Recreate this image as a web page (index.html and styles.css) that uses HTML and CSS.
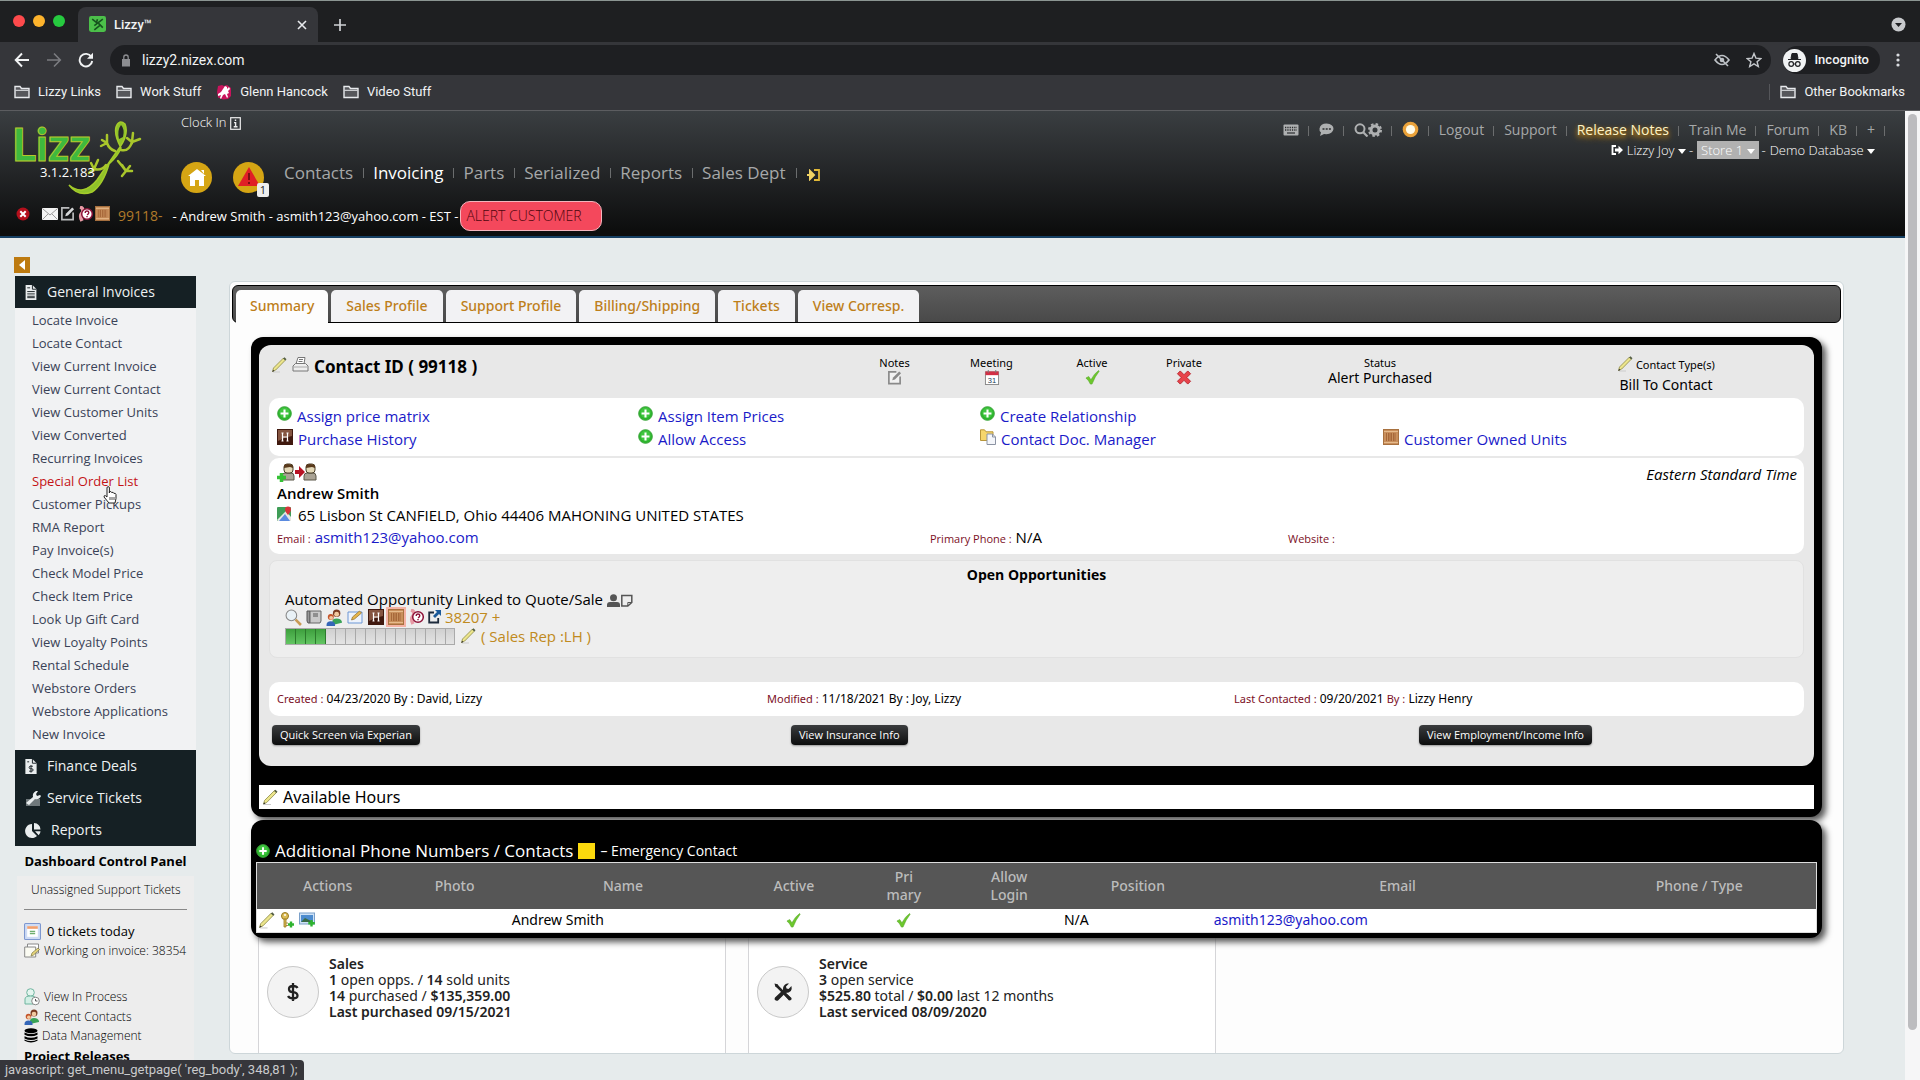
FILE: index.html
```html
<!DOCTYPE html>
<html lang="en">
<head>
<meta charset="utf-8">
<title>Lizzy™</title>
<link rel="stylesheet" href="styles.css">
</head>
<body>
<svg class="sprite" aria-hidden="true">
  <symbol id="folder" viewBox="0 0 16 14"><path d="M1 12.5V1.5h5l1.5 2H15v9z" fill="#56575b" stroke="#e8eaed" stroke-width="1.4"/><path d="M1.5 5.3h13" stroke="#e8eaed"/></symbol>
  <symbol id="pencil" viewBox="0 0 16 16"><path d="M2 15h7" stroke="#ccc"/><path d="M1.500 14.500l1-3.500L12.500 1l2 2L4.700 13z" fill="#ece58c" stroke="#8d8a45" stroke-width=".8"/><path d="M12 1.500L13.500.3 15.500 2.300 14.300 3.600z" fill="#555f45"/><path d="M1.200 14.900l1-2.200 1.200 1.200z" fill="#333"/></symbol>
  <symbol id="plus" viewBox="0 0 16 16"><circle cx="8" cy="8" r="7.300" fill="#2db52d" stroke="#3ba43b"/><circle cx="8" cy="7" r="5.500" fill="#4dd14d" opacity=".6"/><path d="M8 3.800v8.400M3.800 8h8.400" stroke="#fff" stroke-width="2.200"/></symbol>
  <symbol id="hist" viewBox="0 0 16 16"><rect width="16" height="16" fill="#40190f"/><path d="M1 1h14v6Q8 8 1 12z" fill="#855541"/><path d="M5.500 4v8M10.500 4v8M5.500 8h5M4.500 4h2M9.500 4h2M4.500 12h2M9.500 12h2" stroke="#fff" stroke-width="1.200"/></symbol>
  <symbol id="crate" viewBox="0 0 16 16"><rect x=".5" y=".5" width="15" height="15" fill="#c98f5c" stroke="#a8713f"/><rect x="3" y="4" width="10" height="8" fill="#a7683a"/><path d="M4.500 4v8M7 4v8M9.500 4v8M12 4v8" stroke="#d09a66" stroke-width=".8"/><path d="M1 2.500h14M1 13.500h14" stroke="#e6bb8c"/></symbol>
  <symbol id="check" viewBox="0 0 16 16"><path d="M1 8.500l3-1.500 2.300 3.500Q9.500 4 14.500.5l.6.8Q10.500 7 7.500 15H5.700Q4 11 1 8.500z" fill="#6cc72c" stroke="#58a82a" stroke-width=".6"/></symbol>
  <symbol id="cross" viewBox="0 0 16 16"><path d="M4 1l4 4 4-4 3 3-4 4 4 4-3 3-4-4-4 4-3-3 4-4-4-4z" fill="#e8434b" stroke="#b8262e"/></symbol>
  <symbol id="note" viewBox="0 0 16 16"><path d="M10 2H2v12.500h12V7" fill="#f2f2f2" stroke="#8a8a8a" stroke-width="1.800"/><path d="M5.500 11l1-3L13 1.500l2 2L8.500 10z" fill="#8a8a8a"/></symbol>
  <symbol id="notedark" viewBox="0 0 16 16"><path d="M10 2H2v12.500h12V7" fill="none" stroke="#b9bbbc" stroke-width="1.800"/><path d="M5.500 11l1-3L13 1.500l2 2L8.500 10z" fill="#d5d7d8"/></symbol>
  <symbol id="cal" viewBox="0 0 16 16"><rect x="1" y="2" width="14" height="13.500" fill="#fff" stroke="#888"/><path d="M1 1.500h14v4H1z" fill="#d22f45"/><path d="M4 0v3M12 0v3" stroke="#777"/><text x="8" y="13.500" text-anchor="middle" font-size="8" font-family="Liberation Sans" fill="#223a55">31</text></symbol>
  <symbol id="people" viewBox="0 0 16 16"><circle cx="10" cy="4" r="3.500" fill="#7a3b22"/><circle cx="10" cy="5" r="2.300" fill="#f1c9a0"/><path d="M6 15v-3q0-3 4-3t5 3v1z" fill="#3aa357"/><circle cx="4.500" cy="7.500" r="2.800" fill="#c5552b"/><circle cx="4.800" cy="8.300" r="1.800" fill="#f1c9a0"/><path d="M.5 16v-1q0-3.500 4-3.500t4 3.500v1z" fill="#3566b8"/></symbol>
  <symbol id="heart" viewBox="0 0 16 16"><path d="M3 1c4 1 3 5 2 6-2 2-2 4 0 8" fill="none" stroke="#e79aa5" stroke-width="3.500"/><circle cx="10" cy="8" r="5.300" fill="#fff" stroke="#8d1238" stroke-width="1.500"/><path d="M8.200 7Q8.200 5 10 5t1.800 1.700Q11.800 8 10 8.800M10 10v1.300" fill="none" stroke="#8d1238" stroke-width="1.400"/></symbol>
  <symbol id="docs" viewBox="0 0 16 16"><path d="M.5 11.500V.8h4l1.500 2h7v8.700z" fill="#f6d66c" stroke="#b8963a"/><path d="M7 5h5.500l3 3v7.500H7z" fill="#f4f6fa" stroke="#8b93a3"/><path d="M12.500 5v3h3" fill="none" stroke="#8b93a3"/></symbol>
  <symbol id="notes2" viewBox="0 0 16 16"><path d="M3.500 1h11v9h-11z" fill="#fff" stroke="#888"/><path d="M.7 4h11v10H.7z" fill="#fbfbf2" stroke="#888"/><path d="M7 13l1-3 6-5 1.500 1.500-6 5.500z" fill="#e8d77c" stroke="#7a7440" stroke-width=".7"/></symbol>
  <symbol id="doc" viewBox="0 0 12 16"><path d="M0 0h7.500L12 4.500V16H0z" fill="#e9edee"/><path d="M7.500 0v4.500H12M2 3h3M2 7h8M2 9.500h8M2 12h8M2 13.500h8" stroke="#172024" fill="none"/></symbol>
</svg>

<header class="browser">
  <div class="tabstrip">
    <span class="light red"></span><span class="light amber"></span><span class="light green"></span>
    <div class="tab">
      <svg width="17" height="17" viewBox="0 0 16 16"><rect width="16" height="15" rx="2" fill="#4cc04a"/><path d="M3 3l4 3 1-3M5 9l4-3 4-3M9 7l4 4M5 13l5-4" stroke="#16521e" stroke-width="1.500" fill="none"/></svg>
      <span class="tab-title">Lizzy™</span>
      <button class="plain" aria-label="Close tab"><svg width="10" height="10" viewBox="0 0 10 10"><path d="M1 1l8 8M9 1L1 9" stroke="#e8eaed" stroke-width="1.600"/></svg></button>
    </div>
    <button class="plain" aria-label="New tab"><svg width="14" height="14" viewBox="0 0 14 14"><path d="M7 1v12M1 7h12" stroke="#d0d2d5" stroke-width="1.700"/></svg></button>
    <button class="plain push" aria-label="Search tabs"><svg width="15" height="15" viewBox="0 0 15 15"><circle cx="7.500" cy="7.500" r="7" fill="#c8cacd"/><path d="M4 6h7l-3.500 4z" fill="#202124"/></svg></button>
  </div>
  <div class="toolbar">
    <button class="plain" aria-label="Back"><svg width="16" height="16" viewBox="0 0 16 16"><path d="M15 8H2M8 1.500L1.700 8 8 14.500" fill="none" stroke="#f1f3f4" stroke-width="1.900"/></svg></button>
    <button class="plain" aria-label="Forward"><svg width="16" height="16" viewBox="0 0 16 16"><path d="M1 8h13M8 1.500L14.300 8 8 14.500" fill="none" stroke="#7b7c80" stroke-width="1.600"/></svg></button>
    <button class="plain" aria-label="Reload"><svg width="16" height="16" viewBox="0 0 16 16"><path d="M13.300 4.800A6.300 6.300 0 1 0 14.200 9" fill="none" stroke="#f1f3f4" stroke-width="1.900"/><path d="M15 .8v6H9z" fill="#f1f3f4"/></svg></button>
    <div class="omnibox">
      <svg width="10" height="13" viewBox="0 0 10 13"><rect x="1" y="5" width="8" height="7.500" fill="#8c8d91"/><path d="M2.800 5V3.200a2.200 2.200 0 0 1 4.400 0V5" fill="none" stroke="#8c8d91" stroke-width="1.300"/></svg>
      <input type="text" aria-label="Address" value="lizzy2.nizex.com">
      <svg width="16" height="14" viewBox="0 0 16 14"><path d="M1 7q7-9 14 0-7 9-14 0z" fill="none" stroke="#bdc1c6" stroke-width="1.700"/><circle cx="8" cy="7" r="2.300" fill="#bdc1c6"/><path d="M2 1l12 12" stroke="#bdc1c6" stroke-width="1.600"/></svg>
      <svg width="16" height="16" viewBox="0 0 16 16"><path d="M8 1.500l1.900 4.600 5 .4-3.800 3.200 1.200 4.800L8 11.900l-4.300 2.600 1.200-4.800L1.100 6.500l5-.4z" fill="none" stroke="#c4c7cb" stroke-width="1.400"/></svg>
    </div>
    <div class="incog">
      <svg width="23" height="23" viewBox="0 0 23 23"><circle cx="11.500" cy="11.500" r="11.500" fill="#f1f3f4"/><path d="M5 10.500h13M8 9.500l1-5h5l1 5z" stroke="#202124" fill="#202124"/><circle cx="8.200" cy="15" r="2.300" fill="none" stroke="#202124" stroke-width="1.200"/><circle cx="14.800" cy="15" r="2.300" fill="none" stroke="#202124" stroke-width="1.200"/><path d="M10.500 15h2" stroke="#202124"/></svg>
      <span>Incognito</span>
    </div>
    <button class="plain" aria-label="Menu"><svg width="4" height="16" viewBox="0 0 4 16"><circle cx="2" cy="3" r="1.600" fill="#dadce0"/><circle cx="2" cy="8" r="1.600" fill="#dadce0"/><circle cx="2" cy="13" r="1.600" fill="#dadce0"/></svg></button>
  </div>
  <nav class="bookmarks">
    <a href="#"><svg width="16" height="14"><use href="#folder"/></svg>Lizzy Links</a>
    <a href="#"><svg width="16" height="14"><use href="#folder"/></svg>Work Stuff</a>
    <a href="#"><svg width="16" height="16" viewBox="0 0 16 16"><path d="M2 2l4-1 2 1 3-1 4 3v8l-3 3-5 .5-5-2L1 8z" fill="#c8145c"/><path d="M9 2l2 1v2l2-2 1 2-2 2 1 2-2 1 1 3-1 1-2-4-2 1-2 4-1-1 1-3-3 1v-2l3-2 2-3z" fill="#fff"/></svg>Glenn Hancock</a>
    <a href="#"><svg width="16" height="14"><use href="#folder"/></svg>Video Stuff</a>
    <a href="#" class="other"><svg width="16" height="14"><use href="#folder"/></svg>Other Bookmarks</a>
  </nav>
</header>

<div class="viewport">
<div class="page">
  <header class="apphead">
    <div class="headtop">
      <div class="logo">
        <svg width="130" height="76" viewBox="0 0 130 76">
          <text x="-2" y="42" font-family="Lato" font-weight="900" font-size="46" fill="#3fb93e" stroke="#b5c92c" stroke-width="1">Lizz</text>
          <path d="M55 66q14 12 28-5Q96 42 106 28q9-13 5-23-6-5-9 3-2 8 5 21-3 8-12 16Q89 66 78 73q-14 5-23-7z" fill="#8fc22a" stroke="#a4cb2a" stroke-width="1.500"/>
          <path d="M105 20q-2-9 2-14 4 4 2 12z" fill="#25282a"/>
          <path d="M101 32q-6-2-8-8m-5-3l5 3 0-8m0 8l-6 3M107 31q8 2 11-8m-5-4l5 4 1-9m-1 9l8-3M92 46q-4 6-12 4m4-9l-4 9-3-6m3 6l-5 4M104 42q5 6 8 10m-4-6l4 6 4-5m-4 5l-4 5m4-5l6 0" fill="none" stroke="#a9c62b" stroke-width="2.500" stroke-linecap="round"/>
        </svg>
        <span class="version">3.1.2.183</span>
      </div>
      <div class="headmid">
        <a href="#" class="clock">Clock In <svg width="11" height="13" viewBox="0 0 11 13"><rect x=".7" y=".7" width="9.600" height="11.600" fill="none" stroke="#eee" stroke-width="1.200"/><path d="M5.500 2.500v1.600M4 5.600h1.600v4M3.700 9.800h3.800" stroke="#eee" stroke-width="1.400" fill="none"/></svg></a>
        <div class="navrow">
          <a href="#" aria-label="Home" class="round"><svg width="20" height="18" viewBox="0 0 20 18"><path d="M1 8l9-7 9 7h-2v10h-5v-6H8v6H3V8z" fill="#fff"/><path d="M14 2h3v4z" fill="#fff"/></svg></a>
          <a href="#" aria-label="Alerts" class="round alerts"><svg width="22" height="20" viewBox="0 0 22 20"><path d="M11 0l11 19H0z" fill="#e01f26"/><path d="M11 6v7M11 15v2" stroke="#7a0e12" stroke-width="2"/></svg><span class="badge">1</span></a>
          <nav class="mainnav">
            <a href="#">Contacts</a><a href="#" class="on">Invoicing</a><a href="#">Parts</a><a href="#">Serialized</a><a href="#">Reports</a><a href="#">Sales Dept</a>
          </nav>
          <svg width="13" height="12" viewBox="0 0 13 12"><path d="M0 6h5M3 2l4 4-4 4z" stroke="#f0d264" stroke-width="2" fill="#f0d264"/><path d="M7 1h5v10H7" stroke="#e0b838" stroke-width="1.800" fill="none"/></svg>
        </div>
      </div>
      <div class="headright">
        <nav class="tools">
          <a href="#" aria-label="Keyboard"><svg width="16" height="12" viewBox="0 0 16 12"><rect x=".5" y=".5" width="15" height="11" rx="1" fill="#aeb0b1"/><path d="M2 3.500h12M2 6h12" stroke="#2b2d2f" stroke-width="1.300" stroke-dasharray="1.300 1"/><path d="M4 9h8" stroke="#2b2d2f" stroke-width="1.200"/></svg></a>
          <a href="#" aria-label="Chat"><svg width="15" height="13" viewBox="0 0 15 13"><path d="M7.500.5q7 .5 7 5.500-1 5-7 5.200L5 11l-4 2 1-3.500Q0 8 .5 5.500 1.500.5 7.500.5z" fill="#aeb0b1"/><path d="M3.500 6h2M6.700 6h2M9.900 6h2" stroke="#2b2d2f" stroke-width="1.600"/></svg></a>
          <a href="#" aria-label="Search settings"><svg width="28" height="14" viewBox="0 0 28 14"><circle cx="6" cy="5.800" r="4.500" fill="none" stroke="#aeb0b1" stroke-width="2"/><path d="M9 9l4.500 4.500" stroke="#aeb0b1" stroke-width="2.200"/><circle cx="21" cy="7" r="4" fill="none" stroke="#aeb0b1" stroke-width="3"/><circle cx="21" cy="7" r="6" fill="none" stroke="#aeb0b1" stroke-width="2" stroke-dasharray="2.500 2.200"/></svg></a>
          <a href="#" aria-label="Theme"><svg width="17" height="17" viewBox="0 0 17 17"><circle cx="8.500" cy="8.500" r="7.800" fill="#eaa23a"/><circle cx="8.500" cy="8.500" r="4.600" fill="#fffbe8"/></svg></a>
          <a href="#">Logout</a><a href="#">Support</a><a href="#" class="glow">Release Notes</a><a href="#">Train Me</a><a href="#">Forum</a><a href="#">KB</a><a href="#">+</a>
        </nav>
        <div class="who">
          <svg width="12" height="10" viewBox="0 0 12 10"><path d="M5 1H1.500v8H5" fill="none" stroke="#fff" stroke-width="1.800"/><path d="M4 3.500h3.500V.8L12 5 7.500 9.200V6.500H4z" fill="#fff"/></svg>
          <a href="#">Lizzy Joy <i class="caret"></i></a><span>-</span>
          <button class="store">Store 1 <i class="caret"></i></button><span>-</span>
          <a href="#">Demo Database <i class="caret"></i></a>
        </div>
      </div>
    </div>
    <div class="custrow">
      <button class="plain closecust" aria-label="Close contact"><svg width="14" height="14" viewBox="0 0 14 14"><circle cx="7" cy="7" r="6.500" fill="#b3101c"/><path d="M4.300 4.300l5.400 5.400M9.700 4.300L4.300 9.700" stroke="#fff" stroke-width="2"/></svg></button>
      <span class="custicons">
        <svg width="16" height="12" viewBox="0 0 16 12"><rect width="16" height="12" rx="1" fill="#f3f3f3"/><path d="M1 1l7 6 7-6M1 11l5-5M15 11l-5-5" fill="none" stroke="#999"/></svg>
        <svg width="15" height="15"><use href="#notedark"/></svg>
        <svg width="16" height="16"><use href="#heart"/></svg>
        <svg width="15" height="15"><use href="#crate"/></svg>
      </span>
      <a href="#" class="custid">99118-</a>
      <span class="custtext">- Andrew Smith - asmith123@yahoo.com - EST -</span>
      <span class="alertbox">ALERT CUSTOMER</span>
    </div>
  </header>

  <div class="columns">
    <aside class="side">
      <button class="collapse" aria-label="Collapse menu"><svg width="6" height="10" viewBox="0 0 6 10"><path d="M6 0v10L0 5z" fill="#fff"/></svg></button>
      <a href="#" class="sec"><span class="ico"><svg width="12" height="15" viewBox="0 0 12 16"><use href="#doc"/></svg></span>General Invoices</a>
      <ul class="menu">
        <li><a href="#">Locate Invoice</a></li><li><a href="#">Locate Contact</a></li><li><a href="#">View Current Invoice</a></li><li><a href="#">View Current Contact</a></li><li><a href="#">View Customer Units</a></li><li><a href="#">View Converted</a></li><li><a href="#">Recurring Invoices</a></li><li><a href="#" class="hot">Special Order List</a>
          <svg class="pointer" width="17" height="18" viewBox="0 0 17 18"><path d="M5 11V2q0-1.400 1.200-1.400T7.400 2v5V5.700q1.800-.8 2.200.8 1.800-.8 2.200.8 2-.3 2.200 1.200v4L13 17H7L2 11q0-2 1.500-1.300z" fill="#fff" stroke="#222"/><path d="M8 11v3M10 11v3M12 11v3" stroke="#222" stroke-width=".8"/></svg></li><li><a href="#">Customer Pickups</a></li><li><a href="#">RMA Report</a></li><li><a href="#">Pay Invoice(s)</a></li><li><a href="#">Check Model Price</a></li><li><a href="#">Check Item Price</a></li><li><a href="#">Look Up Gift Card</a></li><li><a href="#">View Loyalty Points</a></li><li><a href="#">Rental Schedule</a></li><li><a href="#">Webstore Orders</a></li><li><a href="#">Webstore Applications</a></li><li><a href="#">New Invoice</a></li>
      </ul>
      <a href="#" class="sec"><span class="ico"><svg width="12" height="15" viewBox="0 0 12 16"><path d="M0 0h7.500L12 4.500V16H0z" fill="#e9edee"/><path d="M7.500 0v4.500H12M2 3h2" stroke="#172024" fill="none"/><path d="M8 7.700H5.500Q4 7.700 4 9t1.500 1.400H7q1.200 0 1.200 1.300T7 13H4M6 6.500V14.500" stroke="#172024" fill="none"/></svg></span>Finance Deals</a>
      <a href="#" class="sec"><span class="ico"><svg width="16" height="16" viewBox="0 0 16 16"><path d="M1 8h14v7H1z" fill="#6f787b"/><path d="M1 12l7-6q-1-4 3-6h2l-2 3 1 2 3-1 1 1q-2 4-6 3l-6 6z" fill="#e9edee"/></svg></span>Service Tickets</a>
      <a href="#" class="sec"><span class="ico wide"><svg width="16" height="15" viewBox="0 0 16 15"><path d="M7 1v7l5 5A7 7 0 1 1 7 1z" fill="#e9edee"/><path d="M9 0q6 .5 6.500 6.500H9zM10 8.200h5.500q0 2-1.800 4z" fill="#e9edee"/></svg></span>Reports</a>
      <h2 class="dash">Dashboard Control Panel</h2>
      <div class="dashbox">
        <a href="#" class="unassigned">Unassigned Support Tickets</a>
        <hr>
        <p class="today"><svg width="17" height="17" viewBox="0 0 16 16"><rect x=".5" y=".5" width="15" height="15" rx="1" fill="#cfdcf5" stroke="#7d97cf"/><path d="M3 3h10v10H3z" fill="#fff"/><path d="M3 3h10v2.500H3z" fill="#f0a070"/><path d="M5.500 8h5M5.500 10h5" stroke="#6fae70" stroke-width="1.300"/></svg> 0 tickets today</p>
        <p><svg width="16" height="16"><use href="#notes2"/></svg><a href="#">Working on invoice: 38354</a></p>
        <p class="later"><svg width="16" height="18" viewBox="0 0 16 18"><circle cx="6.500" cy="4.500" r="3.800" fill="#e4f5ef" stroke="#6fb59f"/><path d="M1 16V11q0-3 5.500-3T12 11v5z" fill="#d2efe5" stroke="#6fb59f"/><circle cx="11.500" cy="13" r="3.800" fill="#fff" stroke="#888"/><path d="M11.500 11v2h2" stroke="#555" fill="none"/></svg><a href="#">View In Process</a></p>
        <p><svg width="16" height="16"><use href="#people"/></svg><a href="#">Recent Contacts</a></p>
        <p class="data"><svg width="14" height="15" viewBox="0 0 14 15"><ellipse cx="7" cy="2.800" rx="6.500" ry="2.500"/><path d="M.5 4.500q6.500 3 13 0v2.300q-6.500 3-13 0zM.5 8.200q6.500 3 13 0v2.300q-6.500 3-13 0zM.5 11.500q6.500 3 13 0v1.300q-6.500 3.500-13 0z"/></svg><a href="#">Data Management</a></p>
        <h2 class="proj">Project Releases</h2>
      </div>
    </aside>

    <main class="main">
      <nav class="tabs">
        <a href="#" class="cur">Summary</a><a href="#">Sales Profile</a><a href="#">Support Profile</a><a href="#">Billing/Shipping</a><a href="#">Tickets</a><a href="#">View Corresp.</a>
      </nav>

      <section class="panel first">
        <div class="card">
          <div class="cardhead">
            <h1><svg width="16" height="16"><use href="#pencil"/></svg><svg width="17" height="16" viewBox="0 0 17 16"><path d="M4 7l2-6.500h7L12 7" fill="#fff" stroke="#777"/><path d="M7 2.500h4M6.500 4.500h4" stroke="#777"/><path d="M1 14V9l2.500-2.500h10L16 9v5z" fill="#eee" stroke="#777"/><path d="M1.500 10h14" stroke="#aaa"/></svg>Contact ID ( 99118 )</h1>
            <div class="flag"><span>Notes</span><svg width="15" height="15"><use href="#note"/></svg></div>
            <div class="flag"><span>Meeting</span><svg width="16" height="15"><use href="#cal"/></svg></div>
            <div class="flag"><span>Active</span><svg width="17" height="15"><use href="#check"/></svg></div>
            <div class="flag"><span>Private</span><svg width="16" height="15"><use href="#cross"/></svg></div>
            <div class="flag"><span>Status</span><b>Alert Purchased</b></div>
            <div class="flag types"><span><svg width="16" height="16"><use href="#pencil"/></svg> Contact Type(s)</span><b>Bill To Contact</b></div>
          </div>
          <div class="strip links">
            <div><a href="#"><svg width="15" height="15"><use href="#plus"/></svg>Assign price matrix</a><a href="#"><svg width="16" height="16"><use href="#hist"/></svg>Purchase History</a></div>
            <div><a href="#"><svg width="15" height="15"><use href="#plus"/></svg>Assign Item Prices</a><a href="#"><svg width="15" height="15"><use href="#plus"/></svg>Allow Access</a></div>
            <div><a href="#"><svg width="15" height="15"><use href="#plus"/></svg>Create Relationship</a><a href="#"><svg width="16" height="16"><use href="#docs"/></svg>Contact Doc. Manager</a></div>
            <div class="low"><a href="#"><svg width="16" height="16"><use href="#crate"/></svg>Customer Owned Units</a></div>
          </div>
          <div class="strip person">
            <div class="persontop">
              <svg width="42" height="20" viewBox="0 0 42 20"><g id="guy"><path d="M5 17v-4q0-3 3-3h6q3 0 3 3v4z" fill="#a9a294" stroke="#5b5648"/><rect x="7" y="1" width="9" height="9" rx="3" fill="#e3d8b8" stroke="#4a3e28"/><path d="M7 5V3q0-2 4-2t5 2v2l-3-1z" fill="#5a3a1c"/></g><use href="#guy" x="22"/><path d="M18 7h4V3l6 6-6 6v-4h-4z" fill="#b81324"/><path d="M4.500 10v9M0 14.500h9" stroke="#35c235" stroke-width="3.500"/></svg>
              <em>Eastern Standard Time</em>
            </div>
            <strong>Andrew Smith</strong>
            <p class="addr"><svg width="15" height="16" viewBox="0 0 15 16"><rect y="1" width="14" height="14" rx="1" fill="#3f9d57"/><path d="M0 14L9 5l5 6v4H1z" fill="#e6e8e3"/><path d="M2 15l6-7 5 7" fill="#5b8be0"/><path d="M11 9Q8 5.500 8 3.500a3 3 0 0 1 6 0Q14 5.500 11 9z" fill="#d8343a"/></svg>65 Lisbon St CANFIELD, Ohio 44406 MAHONING UNITED STATES</p>
            <div class="reach">
              <p><span class="lab">Email :</span> <a href="#">asmith123@yahoo.com</a></p>
              <p><span class="lab">Primary Phone :</span> N/A</p>
              <p><span class="lab">Website :</span></p>
            </div>
          </div>
          <div class="opps">
            <h3>Open Opportunities</h3>
            <p>Automated Opportunity Linked to Quote/Sale <svg width="26" height="14" viewBox="0 0 26 14"><circle cx="6.500" cy="3.800" r="3.500" fill="#555"/><path d="M0 13v-2q0-3 3-3h7q3 0 3 3v2z" fill="#555"/><path d="M14.800 1.500h10v7l-4 3.500h-6z" fill="none" stroke="#555" stroke-width="1.500"/><path d="M24.800 8.500h-4V12" fill="none" stroke="#555"/></svg></p>
            <div class="oppicons">
              <svg width="17" height="17" viewBox="0 0 16 16"><circle cx="6" cy="6" r="5" fill="#e9f1f6" stroke="#888"/><path d="M10 10l5 5" stroke="#c99a55" stroke-width="2.500"/></svg>
              <svg width="16" height="16" viewBox="0 0 16 16"><path d="M1 2h3v12H2L1 12z" fill="#999" stroke="#555"/><path d="M4 2h11v10l-1 2H4z" fill="#c9c9c9" stroke="#666"/><path d="M7 5h5M7 7h5" stroke="#555"/></svg>
              <svg width="17" height="17"><use href="#people"/></svg>
              <svg width="17" height="16" viewBox="0 0 16 16"><path d="M.5 3h14v11H.5z" fill="#eef3fb" stroke="#6d97d5"/><path d="M4 11l1-3 7-6 2 2-7 6z" fill="#e6b64c" stroke="#8d6a26" stroke-width=".7"/></svg>
              <svg width="16" height="16"><use href="#hist"/></svg>
              <svg class="tint" width="16" height="16"><use href="#crate"/></svg>
              <svg width="16" height="16"><use href="#heart"/></svg>
              <svg width="13" height="14" viewBox="0 0 13 14"><path d="M6 2.500H1.200v10h9V8" fill="none" stroke="#1d2b3c" stroke-width="1.800"/><path d="M7 0h6v6l-2-2-4 4-2-2 4-4z" fill="#1b5a9a"/></svg>
              <a href="#">38207 +</a>
            </div>
            <div class="progress">
              <span class="bar" role="img" aria-label="4 of 17"><i></i></span>
              <svg width="16" height="16"><use href="#pencil"/></svg><a href="#">( Sales Rep :LH )</a>
            </div>
          </div>
          <div class="strip meta">
            <p><span class="lab">Created :</span> 04/23/2020 By : David, Lizzy</p>
            <p><span class="lab">Modified :</span> 11/18/2021 By : Joy, Lizzy</p>
            <p><span class="lab">Last Contacted :</span> 09/20/2021 <span class="lab">By :</span> Lizzy Henry</p>
          </div>
          <div class="actions">
            <div><button>Quick Screen via Experian</button></div>
            <div><button>View Insurance Info</button></div>
            <div><button>View Employment/Income Info</button></div>
          </div>
        </div>
        <h2 class="hours"><svg width="16" height="17"><use href="#pencil"/></svg>Available Hours</h2>
      </section>

      <section class="panel second">
        <h2><svg width="14" height="14"><use href="#plus"/></svg>Additional Phone Numbers / Contacts <i class="swatch"></i><small>– Emergency Contact</small></h2>
        <table>
          <colgroup><col class="c1"><col class="c2"><col class="c3"><col class="c4"><col class="c5"><col class="c6"><col class="c7"><col class="c8"><col class="c9"></colgroup>
          <thead><tr><th>Actions</th><th>Photo</th><th>Name</th><th>Active</th><th>Pri<br>mary</th><th>Allow<br>Login</th><th>Position</th><th>Email</th><th>Phone / Type</th></tr></thead>
          <tbody><tr>
            <td><span class="rowicons"><svg width="17" height="17"><use href="#pencil"/></svg><svg width="16" height="16" viewBox="0 0 16 16"><circle cx="6" cy="4" r="3.500" fill="#dcbd57" stroke="#96771f"/><circle cx="6" cy="3" r="1" fill="#fff"/><path d="M5 7h2v8H5zM7 11h2M7 13.500h2" fill="#dcbd57" stroke="#96771f" stroke-width=".8"/><path d="M12 9.500v6M9 12.500h6" stroke="#2fb32f" stroke-width="2.400"/></svg><svg width="16" height="15" viewBox="0 0 16 15"><rect x=".5" y="1" width="15" height="11" fill="#cfe2f6" stroke="#7ba0c9"/><path d="M2 3h12v7H2z" fill="#4d8ccf"/><path d="M2 10l4-4 8 4z" fill="#3b6b47"/><path d="M12.500 8v6.500M9.300 11.200h6.500" stroke="#2fb32f" stroke-width="2.400"/></svg></span></td>
            <td></td><td>Andrew Smith</td>
            <td class="mid"><svg width="17" height="15"><use href="#check"/></svg></td>
            <td class="mid"><svg width="17" height="15"><use href="#check"/></svg></td>
            <td></td><td>N/A</td><td><a href="#">asmith123@yahoo.com</a></td><td></td>
          </tr></tbody>
        </table>
      </section>

      <div class="totals">
        <section><span class="disc"><svg width="12" height="20" viewBox="0 0 12 20"><path d="M10.500 6Q9.500 4 6 4 2 4 2 7t4 3.200q4.500.6 4.500 3.500T6 16.500q-4 0-5-2.500M6 1v18" fill="none" stroke="#222" stroke-width="2.300"/></svg></span>
          <p><b>Sales</b><br><b>1</b> open opps. / <b>14</b> sold units<br><b>14</b> purchased / <b>$135,359.00</b><br><b>Last purchased 09/15/2021</b></p></section>
        <section><span class="disc"><svg width="20" height="20" viewBox="0 0 20 20"><path d="M3 3l14 14" stroke="#222" stroke-width="2.500"/><path d="M1.500 1.500l3 .8L6 5 5 6 2.300 4.500zM11 13l2-2 5.500 5q.5 2.500-2.500 2.500z" fill="#222"/><path d="M2 18q-1-1 0-2.500l8-7.500q-.5-5 4-6.500h2l-3 3 .5 2 2 .5 3-3q1.500 7-6 7L5 18.500q-1.500.8-3-.5z" fill="#222"/></svg></span>
          <p><b>Service</b><br><b>3</b> open service<br><b>$525.80</b> total / <b>$0.00</b> last 12 months<br><b>Last serviced 08/09/2020</b></p></section>
      </div>
    </main>
  </div>
</div>
<div class="scroll"><span></span></div>
</div>
<div class="status">javascript: get_menu_getpage( 'reg_body', 348,81 );</div>
</body>
</html>
```
FILE: styles.css
```css
* { box-sizing: border-box; }
html, body { height: 100%; }
body {
  margin: 0;
  display: flex;
  flex-direction: column;
  overflow: hidden;
  background: #e6ebec;
  color: #000;
  font: 14px/18px "Noto Sans", "Open Sans", sans-serif;
}
a { color: inherit; text-decoration: none; }
p, h1, h2, h3, ul { margin: 0; padding: 0; }
ul { list-style: none; }
svg { flex: none; vertical-align: middle; }
button { font-family: inherit; cursor: pointer; }
.sprite { position: absolute; width: 0; height: 0; }
.plain { display: flex; padding: 0; border: 0; background: none; }

/* browser window */
.browser { flex: none; background: #35363a; border-top: 1px solid #8b9592; border-bottom: 1px solid #5c5d60; color: #f1f3f4; font: 13px/16px Roboto, sans-serif; }
.tabstrip { display: flex; align-items: center; height: 41px; padding: 6px 14px 0 13px; background: #1e1f21; }
.light { width: 12px; height: 12px; margin: 0 8px 8px 0; border-radius: 50%; }
.red { background: #fe4a4c; }
.amber { background: #fdb32c; }
.green { background: #26ca3f; }
.tab { display: flex; align-items: center; align-self: stretch; gap: 8px; width: 240px; margin: 0 15px 0 5px; padding: 0 11px; border-radius: 8px 8px 0 0; background: #35363a; }
.tab-title { flex: 1; font-weight: 500; }
.push { margin-left: auto; }
.toolbar { display: flex; align-items: center; gap: 16px; height: 36px; padding: 0 20px 0 14px; }
.omnibox { display: flex; flex: 1; align-items: center; gap: 16px; height: 30px; padding: 0 9px 0 11px; border-radius: 15px; background: #1e1f22; }
.omnibox input { flex: 1; min-width: 0; padding: 0; margin-left: -5px; border: 0; outline: 0; background: none; color: #f1f3f4; font: 14px/18px Roboto, sans-serif; }
.incog { display: flex; align-items: center; gap: 8px; height: 28px; margin-left: -4px; padding-right: 11px; border-radius: 14px; background: #1e1f22; font-weight: 500; }
.bookmarks { display: flex; align-items: center; gap: 15px; height: 32px; padding: 0 15px 4px 14px; }
.bookmarks a { display: flex; align-items: center; gap: 8px; }
.bookmarks .other { margin-left: auto; padding-left: 10px; border-left: 1px solid #55565a; }

.viewport { display: flex; flex: 1; min-height: 0; }
.page { flex: 1; min-width: 0; overflow: hidden; font-family: "Open Sans", sans-serif; }
.scroll { width: 15px; padding: 3px 3px 50px; background: #f6f6f7; }
.scroll span { display: block; height: 100%; border-radius: 5px; background: #bcbcbf; }

/* application header */
.apphead { height: 127px; border-bottom: 2px solid #164063; background: linear-gradient(#3a3e41, #232527 50%, #0d0e0e 95%); color: #fff; }
.headtop { display: flex; height: 88px; padding: 0 18px 0 14px; }
.logo { position: relative; width: 167px; padding-top: 8px; }
.version { position: absolute; left: 26px; top: 52px; font-size: 13px; line-height: 18px; }
.clock { display: block; height: 24px; font-size: 13px; line-height: 22px; font-weight: 300; }
.navrow { display: flex; align-items: center; height: 36px; margin-top: 24px; }
.navrow > svg { margin: 0 0 4px 10px; }
.round { position: relative; display: flex; align-items: center; justify-content: center; width: 31px; height: 31px; margin-right: 21px; border-radius: 50%; background: #d5a514; }
.alerts { margin-right: 20px; }
.badge { position: absolute; right: -5px; bottom: -4px; width: 12px; border-radius: 2px; background: #eee; color: #222; font-size: 11px; line-height: 14px; text-align: center; }
.mainnav { display: flex; padding-bottom: 8px; color: #a6a8a9; font-size: 17px; line-height: 22px; }
.mainnav a { display: flex; align-items: center; }
.mainnav a::after, .tools a::after { content: ""; width: 1px; height: 10px; margin: 0 9px 0 10px; background: #6b6d6e; }
.mainnav a:last-child::after { margin-right: 0; }
.mainnav .on { color: #fff; font-weight: 500; }
.headright { display: flex; flex-direction: column; align-items: flex-end; margin-left: auto; padding-top: 8px; }
.tools { display: flex; height: 21px; color: #a6a8a9; font-size: 14px; line-height: 24px; }
.tools a { display: flex; align-items: center; }
.tools a::after { margin: 2px 10px 0 9px; }
.tools a:last-child::after { margin-right: 2px; }
.tools .glow { color: #fff3c4; font-weight: 500; text-shadow: 0 3px 6px #c98e1c, 0 2px 4px #a56f10; }
.who { display: flex; align-items: center; gap: 4px; height: 20px; padding-right: 12px; font-size: 13px; line-height: 18px; font-weight: 300; }
.who span { margin: 0 0 0 -1px; }
.caret { display: inline-block; border: 4px solid transparent; border-top: 5px solid #fff; border-bottom: 0; vertical-align: 1px; }
.store { height: 18px; padding: 0 4px; border: 0; background: #b1b1b1; color: #fff; font-size: 13px; line-height: 18px; font-weight: 300; }
.custrow { display: flex; align-items: center; height: 34px; padding: 0 16px; line-height: 20px; }
.closecust { margin: 0 20px 5px 0; }
.closecust, .custicons { flex: none; }
.closecust { margin-right: 20px; }
.custicons { display: flex; align-items: center; gap: 2px; width: 76px; margin-left: -8px; padding-bottom: 5px; }
.custid { color: #b07a2a; }
.custtext { margin: 0 2px 0 10px; font-size: 13px; }
.alertbox { width: 142px; padding: 4px 5px; border: 1px solid #f3b5bd; border-radius: 10px; background: #f4485c; color: #4d060d; font-weight: 300; }

/* side menu */
.columns { display: flex; gap: 33px; padding: 0 61px 0 15px; align-items: flex-start; }
.side { flex: none; width: 181px; padding-top: 19px; }
.collapse { display: flex; align-items: center; justify-content: center; width: 16px; height: 16px; margin: 0 0 3px -1px; padding: 0; border: 0; background: #bd7a10; }
.sec { display: flex; align-items: center; height: 32px; padding-left: 10px; background: #152024; color: #eef2f3; font-size: 14px; }
.ico { width: 22px; line-height: 16px; }
.wide { width: 26px; }
.menu { padding: 1px 0 4px 17px; background: #f1f2f3; color: #3a4257; font-size: 13px; line-height: 23px; }
.menu li { position: relative; }
.hot { color: #c41216; }
.pointer { position: absolute; left: 70px; top: 16px; z-index: 1; }
.dash { font-size: 13px; line-height: 30px; font-weight: 700; text-align: center; }
.proj { font-size: 13px; line-height: 24px; font-weight: 700; color: #000; }
.dashbox { margin: 0 2px; padding: 2px 7px 40px; background: #ededed; color: #000; font-size: 12px; line-height: 20px; font-weight: 300; }
.unassigned { display: block; padding: 2px 0 2px 7px; white-space: nowrap; }
.dashbox hr { margin: 7px 0 11px; border: 0; border-top: 1px solid #888; }
.dashbox p { display: flex; align-items: center; gap: 4px; white-space: nowrap; }
.dashbox .today { gap: 6px; font-size: 13px; font-weight: 400; }
.dashbox .later { margin-top: 26px; }
.dashbox .data { line-height: 17px; }

/* contact pane */
.main { flex: 1; min-width: 0; margin-top: 43px; padding: 3px 2px 0; border: 1px solid #cdd6d9; border-radius: 6px; background: #fdfdfd; font-family: "Noto Sans", sans-serif; }
.tabs { display: flex; gap: 3px; height: 38px; padding: 4px 3px 0; border: 1px solid #000; border-radius: 6px; background: linear-gradient(#5d5d5d, #494949); color: #be7f1a; font-weight: 500; line-height: 32px; }
.tabs a { padding: 0 15px; border-radius: 5px 5px 0 0; background: #f2f2f4; }
.tabs .cur { padding: 0 14px; background: #fdfdfd; height: 34px; }
.panel { position: relative; margin: 0 19px; border-radius: 12px; background: #000; box-shadow: 4px 4px 6px #555; }
.first { margin-top: 14px; padding: 8px; }
.card { padding: 0 10px 21px; border-radius: 12px; background: #e8e8e8; }
.cardhead { display: grid; grid-template-columns: 579fr 93fr 101fr 100fr 84fr 308fr 264fr; height: 53px; padding: 0 6px 0 0; }
.cardhead h1 { display: flex; gap: 5px; padding: 12px 0 0 2px; font-size: 17px; line-height: 20px; font-weight: 700; }
.flag { display: flex; flex-direction: column; align-items: center; padding-top: 10px; font-size: 11px; line-height: 15px; }
.flag b { font-size: 14px; font-weight: 400; }
.types { padding-top: 10px; line-height: 20px; }
.types b { line-height: 16px; }
.types svg { margin-bottom: 5px; }
.strip { border-radius: 10px; background: #fff; }
.links { display: grid; grid-template-columns: 361fr 342fr 403fr 421fr; height: 58px; padding: 7px 0 5px 8px; color: #1a1ac8; }
.links, .person, .opps { font-family: "Open Sans", sans-serif; font-size: 15px; line-height: 23px; }
.links a { display: flex; align-items: center; gap: 5px; }
.links a svg { margin-bottom: 6px; }
.links .low { padding-top: 23px; }
.person { height: 96px; margin-top: 2px; padding: 5px 7px 0 8px; line-height: 20px; }
.persontop { display: flex; justify-content: space-between; height: 20px; line-height: 22px; }
.person strong { display: block; font-weight: 600; }
.addr { display: flex; gap: 6px; align-items: center; line-height: 25px; }
.addr svg { margin-bottom: 4px; }
.reach { display: grid; grid-template-columns: 653fr 358fr 509fr; line-height: 18px; }
.reach a { color: #1a1ac8; }
.lab { color: #7c1026; font-size: 11px; }
.opps { height: 98px; margin: 6px 0 24px; padding: 4px 15px; border: 1px solid #e1e1e1; border-radius: 8px; background: #eee; line-height: 18px; }
.opps h3 { font-size: 14px; line-height: 20px; font-weight: 700; text-align: center; }
.opps p { padding-top: 5px; }
.opps a { color: #c08a20; }
.oppicons { display: flex; align-items: center; gap: 4px; height: 18px; }
.tint { outline: 2px solid #f5b3a6; }
.progress { display: flex; align-items: center; gap: 5px; height: 20px; }
.bar { width: 170px; height: 17px; border: 1px solid #aaa; background: repeating-linear-gradient(90deg, transparent 0 9px, #a9a9a9 9px 10px), linear-gradient(#d0d0d0, #e4e4e4); }
.bar i { display: block; width: 40px; height: 15px; background: repeating-linear-gradient(90deg, transparent 0 9px, #2c7a2c 9px 10px), linear-gradient(#3d9f3d, #62c562); }
.meta { display: grid; grid-template-columns: 490fr 467fr 570fr; height: 34px; padding-left: 8px; font-size: 12px; line-height: 34px; }
.actions { display: grid; grid-template-columns: 519fr 628fr 385fr; margin-top: 9px; padding-left: 3px; }
.actions button { display: block; height: 20px; padding: 0 8px; border: 0; border-radius: 4px; background: linear-gradient(#3a3c3e, #0c0d0d); color: #fff; font-family: "Open Sans", sans-serif; font-size: 11px; line-height: 20px; box-shadow: 0 1px 2px #999; }
.hours { display: flex; align-items: center; gap: 5px; height: 24px; margin-top: 19px; padding-left: 3px; background: #fff; font-size: 16px; line-height: 26px; font-weight: 400; }
.second { margin-top: 3px; padding: 20px 5px 5px; }
.second h2 { display: flex; align-items: center; gap: 5px; height: 22px; color: #fff; font-family: "Open Sans", sans-serif; font-size: 17px; line-height: 24px; font-weight: 400; }
.second small { font-size: 14px; }
.swatch { width: 17px; height: 16px; background: #fbd90d; }
table { width: 100%; border-collapse: collapse; table-layout: fixed; border: 1px solid #ddd; background: #fff; }
.c1 { width: 9.1%; } .c2 { width: 7.2%; } .c3 { width: 14.4%; } .c4 { width: 7.5%; } .c5 { width: 6.6%; } .c6 { width: 6.9%; } .c7 { width: 9.6%; } .c8 { width: 23.7%; } .c9 { width: 15%; }
th { height: 46px; padding: 0; background: #565656; color: #bcbcbc; font-weight: 500; line-height: 18px; }
td { height: 24px; padding: 0 1px; line-height: 20px; }
td a { color: #1a1ac8; }
.mid { text-align: center; }
.mid svg, .rowicons svg { display: block; margin: 0 auto; }
.rowicons { display: flex; gap: 4px; }
.rowicons svg { margin: 0; }
.totals { display: flex; gap: 22px; margin: 0 26px; }
.totals section { display: flex; gap: 10px; width: 468px; height: 115px; padding: 18px 8px 0; border: 1px solid #d5d5d8; border-width: 0 1px; background: #fff; color: #222; font-size: 14px; line-height: 16px; }
.totals b { font-weight: 600; }
.disc { display: flex; flex: none; align-items: center; justify-content: center; width: 52px; height: 52px; margin-top: 10px; border: 1px solid #c9c9c9; border-radius: 50%; background: #f3f3f3; }

.status { position: fixed; left: 0; bottom: 0; z-index: 5; padding: 0 7px 0 5px; border-top-right-radius: 4px; background: #36363b; color: #c9cacc; font: 13px/20px Roboto, sans-serif; }
```
